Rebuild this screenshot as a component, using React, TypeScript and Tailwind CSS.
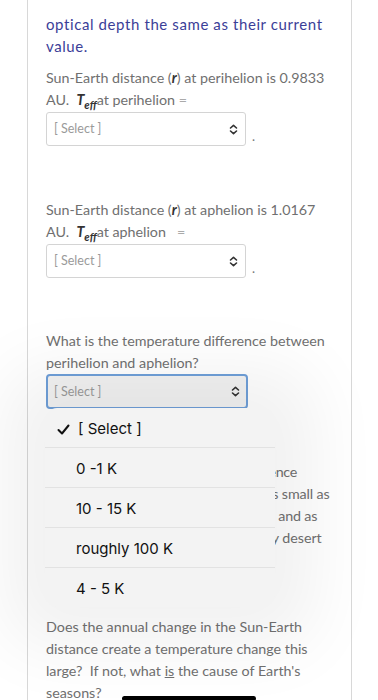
import React from "react";

const Chevrons = () => (
  <svg width="9" height="11" viewBox="0 0 9 11" fill="none" stroke="#333" strokeWidth="1.6" strokeLinecap="round" strokeLinejoin="round">
    <path d="M1.5 4 L4.5 1.3 L7.5 4" />
    <path d="M1.5 7 L4.5 9.7 L7.5 7" />
  </svg>
);

const Select = ({ focused = false }: { focused?: boolean }) => (
  <div className="flex items-end gap-[6px]">
    <div
      className={
        focused
          ? "w-[202px] h-[35px] rounded-[4px] border-2 border-[#6f9fd8] bg-[#f2f2f2] flex items-center justify-between pl-[6px] pr-[6px]"
          : "w-[200px] h-[34px] rounded-[3px] border border-[#d4d4d4] bg-white flex items-center justify-between pl-[7px] pr-[7px]"
      }
    >
      <span className="text-[12.5px] text-[#9a9a9a]">[ Select ]</span>
      <Chevrons />
    </div>
    {!focused && <span className="text-[13px] text-[#777] leading-[20px]">.</span>}
  </div>
);

const Teff = () => (
  <span className="text-[#333] font-bold italic">
    T<span className="inline-block text-[11px] translate-y-[4px] leading-[11px]">eff</span>
  </span>
);

export default function App() {
  const items = ["0 -1 K", "10 - 15 K", "roughly 100 K", "4 - 5 K"];
  return (
    <div className="relative h-[700px] overflow-hidden bg-white" style={{ fontFamily: "Lato, 'Noto Sans', sans-serif" }}>
      <div className="ml-[27px] w-[325px] min-h-[700px] border-x border-[#d8d8d8] pl-[18px] pr-[14px] pt-[13px] text-[14.3px] leading-[22px] text-[#707070]">
        <p className="text-[#3b3e98] text-[15px] tracking-[0.6px]">optical depth the same as their current value.</p>

        <p className="mt-[10px]">
          Sun-Earth distance (<span className="text-[#333] font-bold italic">r</span>) at perihelion is 0.9833 AU.&nbsp;{" "}
          <Teff />at perihelion <span className="text-[#aaa]">=</span>
        </p>
        <div className="mt-[1px]">
          <Select />
        </div>

        <p className="mt-[53px]">
          Sun-Earth distance (<span className="text-[#333] font-bold italic">r</span>) at aphelion is 1.0167 AU.&nbsp;{" "}
          <Teff />at aphelion &nbsp; <span className="text-[#aaa]">=</span>
        </p>
        <div className="mt-[1px]">
          <Select />
        </div>

        <p className="mt-[52px]">What is the temperature difference between perihelion and aphelion?</p>
        <div>
          <Select focused />
        </div>

        <div className="mt-[30px] whitespace-nowrap">
          <div>For comparison, consider the daily</div>
          <div className="tracking-[-0.3px]">(from day to night) temperature difference</div>
          <div className="tracking-[-0.13px]">on our Earth, which at times can be as small as</div>
          <div className="tracking-[-0.18px]">a few degrees in humid, cloudy places and as</div>
          <div className="tracking-[-0.05px]">large as 20 K or more in a hot and dry desert</div>
        </div>

        <p className="mt-[67px]">
          Does the annual change in the Sun-Earth distance create a temperature change this large?&nbsp; If not, what{" "}
          <span className="underline">is</span> the cause of Earth's seasons?
        </p>
      </div>

      <div
        className="absolute left-[45px] top-[408px] w-[230px] rounded-[12px] bg-[#f3f3f3] shadow-[0_0_70px_40px_rgba(0,0,0,0.06)] text-[15px] text-[#111]"
        style={{ fontFamily: "Inter, 'Liberation Sans', sans-serif" }}
      >
        <div className="h-[40px] flex items-center pl-[12px] pt-[4px] border-b border-[#e2e2e2]">
          <svg width="13" height="11" viewBox="0 0 13 11" fill="none" stroke="#111" strokeWidth="2" strokeLinecap="round" strokeLinejoin="round" className="mr-[8px]">
            <path d="M1.5 6 L5 9.5 L11.5 1.5" />
          </svg>
          <span>[ Select ]</span>
        </div>
        {items.map((t, i) => (
          <div
            key={t}
            className={
              i < items.length - 1
                ? "h-[40px] flex items-center pl-[31px] pt-[4px] border-b border-[#e2e2e2]"
                : "h-[39px] flex items-center pl-[31px] pt-[4px]"
            }
          >
            {t}
          </div>
        ))}
      </div>

      <div className="absolute left-[122px] top-[696px] w-[134px] h-[5px] rounded-full bg-black" />
    </div>
  );
}
